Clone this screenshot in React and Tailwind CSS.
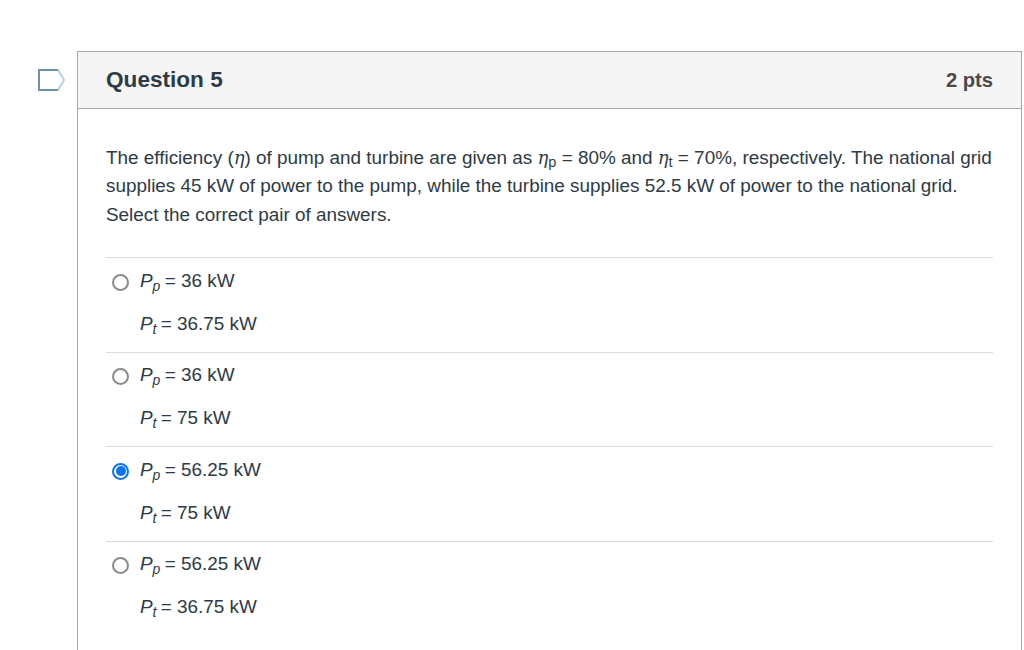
const Eta = ({ sub }) => (
  <span className="whitespace-nowrap">
    <span className="italic font-['DejaVu_Serif',serif] text-[18px] leading-none">η</span>
    {sub && <sub className="text-[14.5px] leading-none bottom-[-3px] not-italic">{sub}</sub>}
  </span>
);

const Sym = ({ sub }) => (
  <span className="italic">
    P<sub className="text-[14px] leading-none bottom-[-4px] mr-[-1px]">{sub}</sub>
  </span>
);

const answers = [
  { p: "36", t: "36.75" },
  { p: "36", t: "75" },
  { p: "56.25", t: "75", on: true },
  { p: "56.25", t: "36.75" },
];

const Answer = ({ p, t, on }) => (
  <div className="flex h-[94.5px] border-t border-[#dcdcdc] pl-[6px] text-[#2d3b45]">
    <div className="w-[28px] pt-[15.5px] shrink-0">
      {on ? (
        <div className="w-[17px] h-[17px] rounded-full border-2 border-[#0b74f0] flex items-center justify-center">
          <div className="w-[10px] h-[10px] rounded-full bg-[#0b74f0]" />
        </div>
      ) : (
        <div className="w-[17px] h-[17px] rounded-full border-2 border-[#8a8a8a]" />
      )}
    </div>
    <div className="pt-[8.4px] leading-[27px]">
      <div className="h-[43px]"><Sym sub="p" /> = {p} kW</div>
      <div><Sym sub="t" /> = {t} kW</div>
    </div>
  </div>
);

export default function App() {
  return (
    <div className="h-[650px] w-[1024px] overflow-hidden bg-white font-['Liberation_Sans',Arial,sans-serif]">
      <div className="flex pt-[51px]">
        <div className="w-[77px] shrink-0 pl-[37px] pt-[16px]">
          <svg width="29" height="26" viewBox="0 0 29 26" fill="none">
            <path d="M2 3 H21 L27 13 L21 23 H2 Z" fill="#fff" stroke="#b9cfdd" strokeWidth="2" />
            <path d="M21 3 H2 V23 H21" stroke="#6a96b3" strokeWidth="2" />
          </svg>
        </div>
        <div className="w-[945px] h-[620px] border border-[#a8a8a8] border-b-0">
          <div className="flex items-center justify-between h-[57px] bg-[#f5f5f5] border-b border-[#a8a8a8] px-[28px] text-[#2d3b45]">
            <h2 className="text-[22.6px] font-bold">Question 5</h2>
            <span className="text-[20.2px] font-bold text-[#4a4a4a]">2 pts</span>
          </div>
          <div className="px-[28px] pt-[34.5px] text-[18.9px] leading-[28.5px] text-[#2d3b45]">
            <p className="h-[85.8px]">
              The efficiency (<Eta />) of pump and turbine are given as <Eta sub="p" /> = 80% and <Eta sub="t" /> = 70%, respectively. The national grid supplies 45 kW of power to the pump, while the turbine supplies 52.5 kW of power to the national grid. Select the correct pair of answers.
            </p>
            <div className="mt-[28px]">
              {answers.map((a, i) => (
                <Answer key={i} {...a} />
              ))}
            </div>
          </div>
        </div>
      </div>
    </div>
  );
}
